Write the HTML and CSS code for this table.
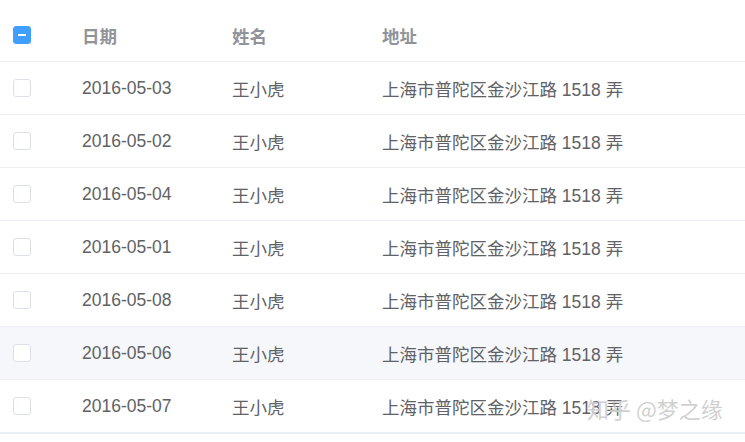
FILE: index.html
```html
<!DOCTYPE html>
<html lang="zh-CN">
<head>
<meta charset="utf-8">
<title>表格</title>
<link rel="stylesheet" href="styles.css">
</head>
<body>
<div class="table">
  <div class="row head">
    <div class="cell sel"><span class="cb indeterminate"><span class="bar"></span></span></div>
    <div class="cell date">日期</div>
    <div class="cell name">姓名</div>
    <div class="cell addr">地址</div>
  </div>
  <div class="row"><div class="cell sel"><span class="cb"></span></div><div class="cell date">2016-05-03</div><div class="cell name">王小虎</div><div class="cell addr">上海市普陀区金沙江路 1518 弄</div></div>
  <div class="row"><div class="cell sel"><span class="cb"></span></div><div class="cell date">2016-05-02</div><div class="cell name">王小虎</div><div class="cell addr">上海市普陀区金沙江路 1518 弄</div></div>
  <div class="row"><div class="cell sel"><span class="cb"></span></div><div class="cell date">2016-05-04</div><div class="cell name">王小虎</div><div class="cell addr">上海市普陀区金沙江路 1518 弄</div></div>
  <div class="row"><div class="cell sel"><span class="cb"></span></div><div class="cell date">2016-05-01</div><div class="cell name">王小虎</div><div class="cell addr">上海市普陀区金沙江路 1518 弄</div></div>
  <div class="row"><div class="cell sel"><span class="cb"></span></div><div class="cell date">2016-05-08</div><div class="cell name">王小虎</div><div class="cell addr">上海市普陀区金沙江路 1518 弄</div></div>
  <div class="row hover"><div class="cell sel"><span class="cb"></span></div><div class="cell date">2016-05-06</div><div class="cell name">王小虎</div><div class="cell addr">上海市普陀区金沙江路 1518 弄</div></div>
  <div class="row"><div class="cell sel"><span class="cb"></span></div><div class="cell date">2016-05-07</div><div class="cell name">王小虎</div><div class="cell addr">上海市普陀区金沙江路 1518 弄</div></div>
</div>
<div class="watermark">知乎 @梦之缘</div>
</body>
</html>
```
FILE: styles.css
```css
html, body {
  margin: 0;
  padding: 0;
  background: #fff;
}
body {
  font-family: "Liberation Sans", Arial, "Noto Sans CJK SC", sans-serif;
  font-size: 17.5px;
  color: #606266;
  position: relative;
  width: 745px;
  height: 442px;
  overflow: hidden;
}
.table {
  margin-top: 9px;
  border-bottom: 1px solid #ebeef5;
}
.row {
  display: flex;
  align-items: center;
  height: 52px;
  border-bottom: 1px solid #ebeef5;
}
.row.hover {
  background: #f5f7fa;
}
.head {
  color: #909399;
  font-weight: bold;
}
.cell {
  box-sizing: border-box;
  padding-left: 12px;
  white-space: nowrap;
}
.sel {
  width: 70px;
  padding-left: 13px;
  display: flex;
  align-items: center;
}
.date { width: 150px; }
.name { width: 150px; }
.addr { flex: 1; }
.cb {
  box-sizing: border-box;
  width: 18px;
  height: 18px;
  border: 1px solid #dcdfe6;
  border-radius: 3px;
  background: #fff;
  display: flex;
  align-items: center;
  justify-content: center;
}
.cb.indeterminate {
  background: #409eff;
  border-color: #409eff;
}
.cb .bar {
  width: 8px;
  height: 2px;
  background: #fff;
}
.watermark {
  position: absolute;
  left: 587px;
  top: 392px;
  font-family: "Noto Sans CJK SC", sans-serif;
  font-size: 22px;
  color: rgba(200, 200, 200, 0.85);
  text-shadow: 0 0 1px rgba(255,255,255,0.9);
  white-space: nowrap;
}
```
